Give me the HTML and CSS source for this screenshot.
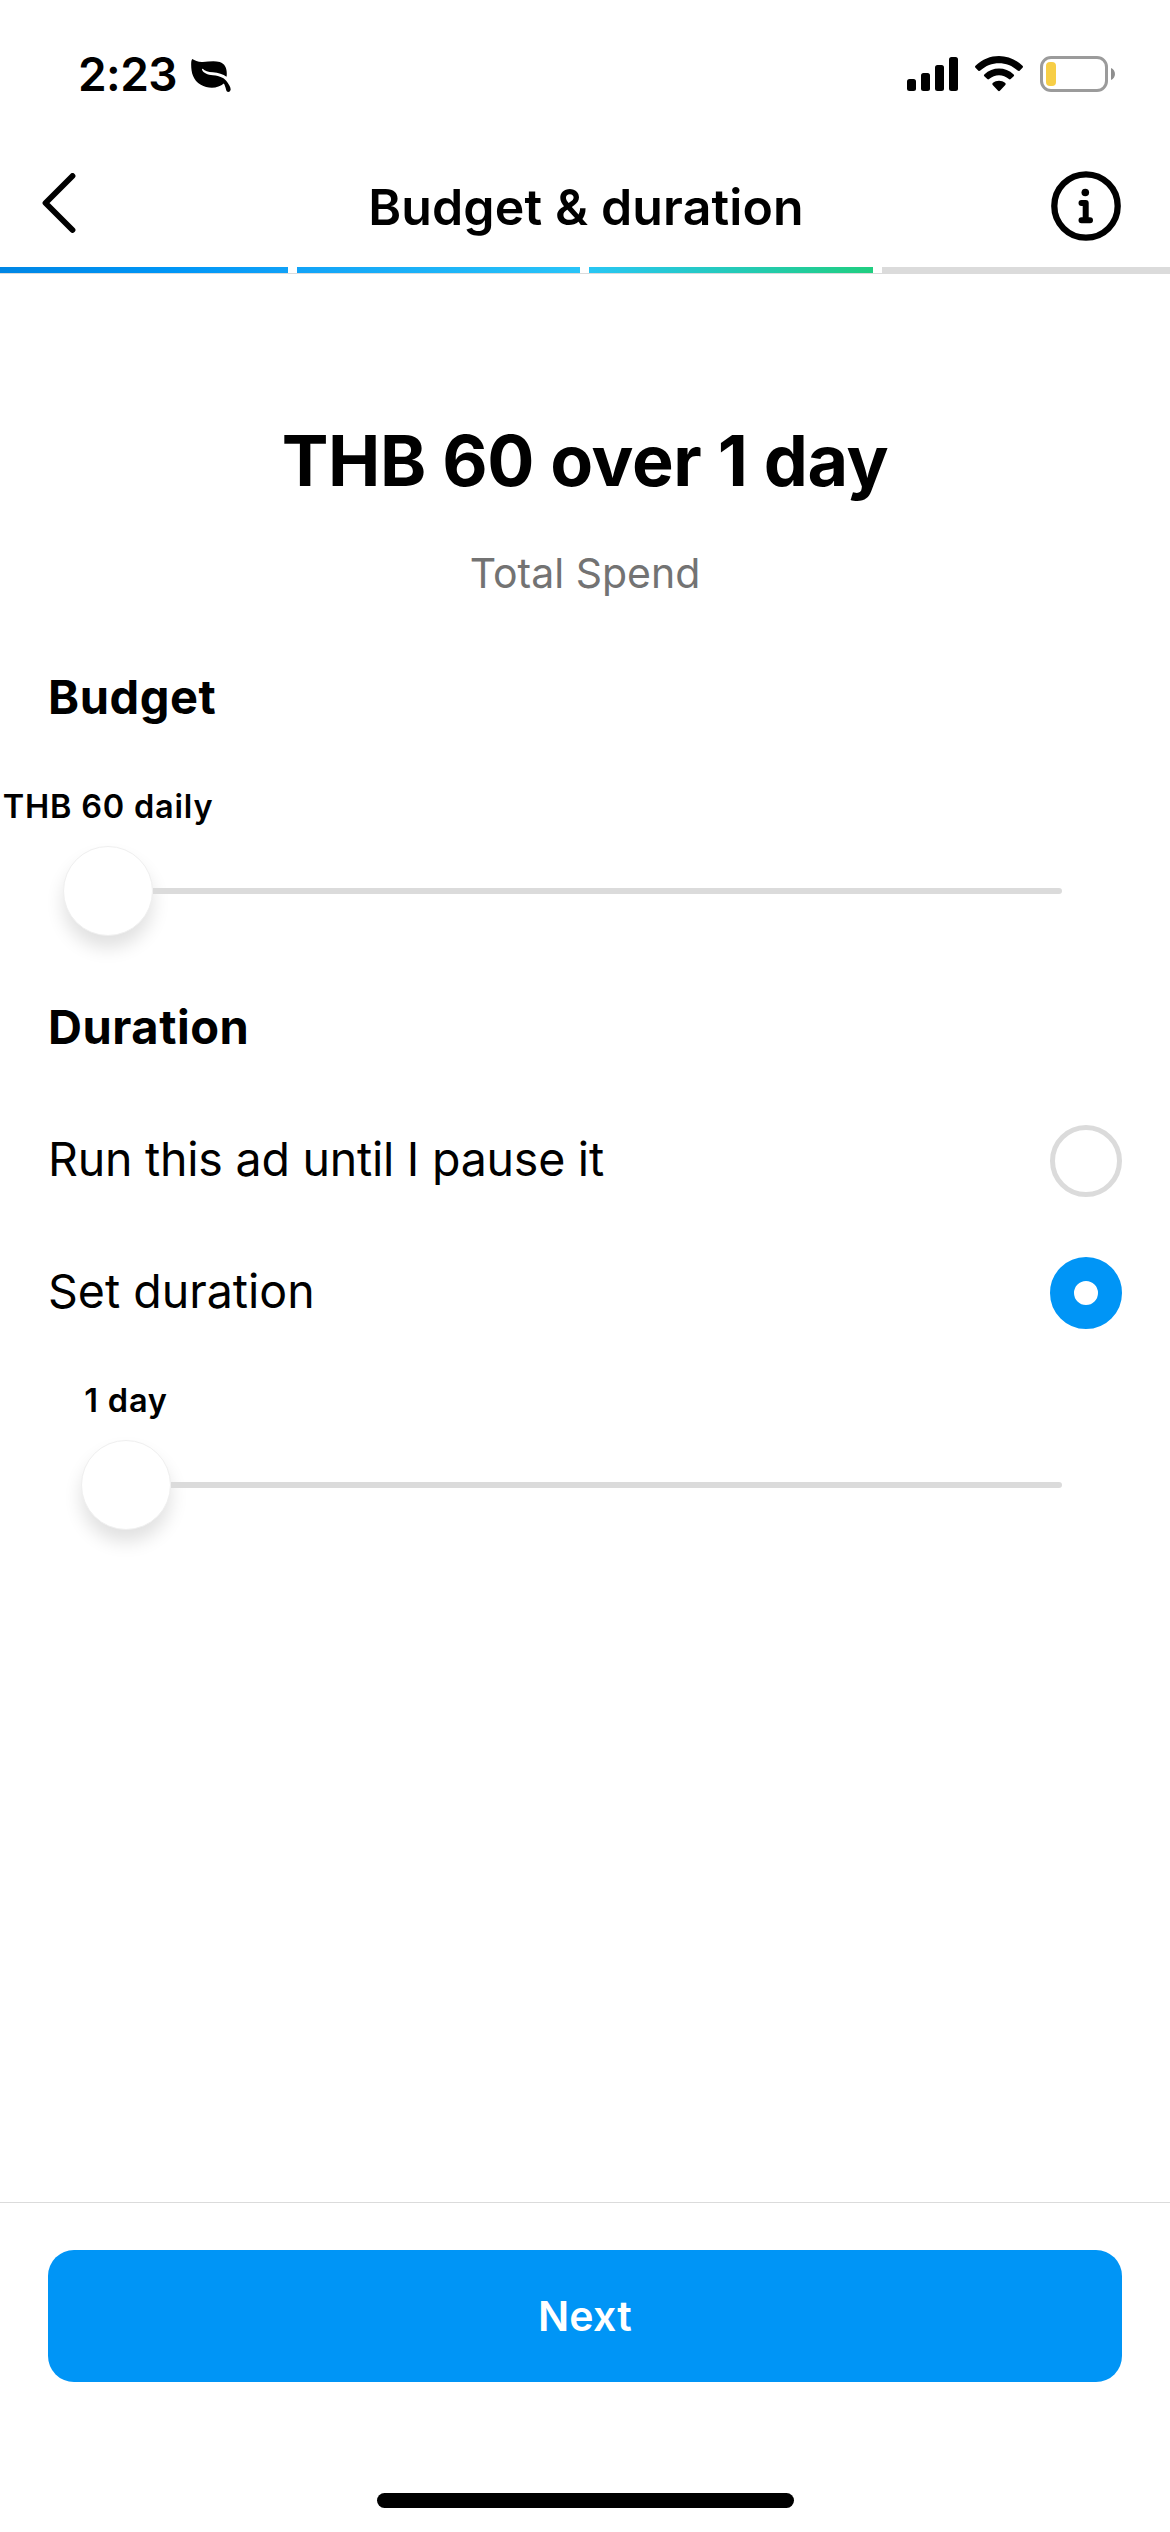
FILE: index.html
```html
<!DOCTYPE html>
<html lang="en">
<head>
<meta charset="utf-8">
<title>Budget &amp; duration</title>
<link rel="stylesheet" href="styles.css">
</head>
<body>
<div class="screen">
  <div class="status-bar">
    <div class="status-left">
      <span class="time">2:23</span>
      <svg class="leaf" width="40" height="35" viewBox="0 0 41 36">
        <path d="M1.2 1C4 2.5 7 4.2 12 4C18 3.8 24 2.5 29.500 4.200C35.500 6.200 37.500 12 36.500 19.300C33 16.500 28 15.300 22.500 14.700C17.500 14.200 14 13.300 12.300 11.200C11.700 10.600 11 11.200 11.300 12C12.500 15.500 17 17.200 22.500 17.700C30 18.400 34.500 20.500 37.300 25C39 27.700 41.200 30.500 40.600 33C40 35.600 36.600 35.600 36.100 33C35.500 30.300 34.700 28 33.700 26.300C28 31.500 17.500 32 10 27.500C2 22.700 0 15 .1 6C.1 4 .4 2 1.200 1Z"/>
      </svg>
    </div>
    <div class="status-right">
      <svg class="signal" width="51" height="34" viewBox="0 0 51 34">
        <rect x="0" y="22" width="9" height="12" rx="2.500"/>
        <rect x="14" y="16" width="9" height="18" rx="2.500"/>
        <rect x="28" y="8" width="9" height="26" rx="2.500"/>
        <rect x="42" y="0" width="9" height="34" rx="2.500"/>
      </svg>
      <svg class="wifi" width="48" height="36" viewBox="0 0 48 36">
        <path d="M.5 9.800C14-3.200 34-3.200 47.500 9.800Q48.500 10.800 47.500 11.800L44.600 14.700Q43.700 15.500 42.700 14.600C32 4.800 16 4.800 5.300 14.600Q4.300 15.500 3.400 14.700L.5 11.800Q-.5 10.800 .5 9.800Z"/>
        <path d="M9.300 18.400C17.700 10.500 30.300 10.500 38.700 18.400Q39.600 19.300 38.700 20.200L35.700 23.100Q34.800 23.900 33.900 23.100C28.200 18 19.800 18 14.100 23.100Q13.200 23.900 12.300 23.100L9.300 20.200Q8.400 19.300 9.300 18.400Z"/>
        <path d="M17.700 27.100C21.500 24.100 26.500 24.100 30.300 27.100Q31.200 28 30.300 28.900L24.900 34.800Q24 35.600 23.100 34.800L17.700 28.900Q16.800 28 17.700 27.100Z"/>
      </svg>
      <svg class="battery" width="75" height="36" viewBox="0 0 75 36">
        <rect x="1.500" y="1.500" width="65" height="33" rx="9.500" fill="none" stroke="#9b9b9b" stroke-width="3"/>
        <rect x="6" y="6" width="10" height="24" rx="4" fill="#f7ce46"/>
        <path d="M71 12C76.300 14 76.300 22 71 24Z" fill="#8e8e8e"/>
      </svg>
    </div>
  </div>

  <header class="header">
    <svg class="back" width="34" height="60" viewBox="0 0 34 60">
      <path d="M30.500 3L3.500 30L30.500 57" fill="none" stroke="#000" stroke-width="5.800" stroke-linecap="round" stroke-linejoin="round"/>
    </svg>
    <h1 class="header-title">Budget &amp; duration</h1>
    <svg class="info" width="70" height="70" viewBox="0 0 70 70">
      <circle cx="35" cy="35" r="31.700" fill="none" stroke="#000" stroke-width="6.300"/>
      <circle cx="34.300" cy="21.500" r="3.800"/>
      <path d="M30.500 32H34.700V49.300M30.500 49.300H39" fill="none" stroke="#000" stroke-width="6" stroke-linecap="round" stroke-linejoin="round"/>
    </svg>
  </header>

  <div class="progress">
    <span class="step step-1"></span>
    <span class="step step-2"></span>
    <span class="step step-3"></span>
    <span class="step step-4"></span>
  </div>

  <main class="content">
    <p class="total">THB 60 over 1 day</p>
    <p class="total-caption">Total Spend</p>

    <h2 class="section-title">Budget</h2>
    <div class="slider slider-budget">
      <div class="slider-label">THB 60 daily</div>
      <div class="slider-row"><span class="thumb"></span><span class="track"></span></div>
    </div>

    <h2 class="section-title">Duration</h2>
    <div class="option"><span class="option-label option-run">Run this ad until I pause it</span><span class="radio"></span></div>
    <div class="option"><span class="option-label">Set duration</span><span class="radio radio-on"></span></div>
    <div class="slider slider-duration">
      <div class="slider-label">1 day</div>
      <div class="slider-row"><span class="thumb"></span><span class="track"></span></div>
    </div>
  </main>

  <footer class="footer">
    <button class="next">Next</button>
    <span class="home-indicator"></span>
  </footer>
</div>
</body>
</html>
```
FILE: styles.css
```css
* { box-sizing: border-box; }

body {
  margin: 0;
  background: #fff;
  color: #000;
  font-family: Inter, "Liberation Sans", sans-serif;
}

h1, h2, p { margin: 0; }

.screen {
  display: flex;
  flex-direction: column;
  width: 1170px;
  height: 2532px;
  overflow: hidden;
}

.status-bar {
  display: flex;
  justify-content: space-between;
  align-items: center;
  height: 148px;
  padding: 0 55px 0 78px;
}

.status-left, .status-right { display: flex; align-items: center; }
.status-left { gap: 14px; }
.time {
  font-size: 46px;
  font-weight: 600;
  line-height: 56px;
  letter-spacing: -0.6px;
}
.leaf { margin-top: 2px; }
.signal { margin-right: 17px; }
.wifi { margin: 0 17px 1px 0; }

.header {
  display: flex;
  justify-content: space-between;
  align-items: center;
  height: 119px;
  padding: 0 49px 0 42px;
}

.back { margin: 0 45px 9px 0; }
.info { margin-bottom: 3px; }
.header-title {
  margin-bottom: 2px;
  font-size: 50px;
  font-weight: 600;
  line-height: 60px;
  letter-spacing: 0.14px;
}

.progress {
  display: grid;
  grid-template-columns: 288px 283px 284px 288px;
  column-gap: 9px;
  height: 7px;
  border-bottom: 1px solid #dbdbdb;
}

.step-1 { background: linear-gradient(90deg, #0086e4, #0096f6 60%, #10a1f7); }
.step-2 { background: linear-gradient(90deg, #12a3f7, #28c4f8); }
.step-3 { background: linear-gradient(90deg, #28c6f4, #20ce80); }
.step-4 { background: #dbdbdb; }

.content { flex: 1; padding: 145px 48px 0; }

.total {
  font-size: 70px;
  font-weight: 700;
  line-height: 84px;
  letter-spacing: -0.36px;
  text-align: center;
}

.total-caption {
  margin-top: 45px;
  color: #737373;
  font-size: 41px;
  line-height: 50px;
  text-align: center;
}

.section-title {
  margin-top: 69px;
  font-size: 47px;
  font-weight: 700;
  line-height: 60px;
  letter-spacing: 0.55px;
}

.slider { width: 999px; margin-left: 15px; }
.slider-budget { margin-top: 60px; margin-bottom: -8px; }
.slider-duration { width: 981px; margin-top: 52px; margin-left: 33px; }

.slider-label {
  display: flex;
  justify-content: center;
  width: 90px;
  margin-bottom: 19px;
  font-size: 32.500px;
  font-weight: 600;
  line-height: 40px;
  letter-spacing: 0.8px;
  white-space: nowrap;
}

.slider-row { display: flex; align-items: center; }

.thumb {
  width: 90px;
  height: 90px;
  border: 1px solid #efefef;
  border-radius: 50%;
  background: #fff;
  box-shadow: 0 12px 18px rgba(0, 0, 0, 0.12);
}

.track {
  flex: 1;
  height: 6px;
  border-radius: 0 3px 3px 0;
  background: #dbdbdb;
}

.option {
  display: flex;
  justify-content: space-between;
  align-items: center;
  height: 72px;
  margin-top: 60px;
}

.section-title + .option { margin-top: 68px; }

.option-label { padding-bottom: 4px; font-size: 46.500px; line-height: 60px; }
.option-run { letter-spacing: -0.23px; }

.radio {
  width: 72px;
  height: 72px;
  border: 5px solid #dbdbdb;
  border-radius: 50%;
}

.radio-on { border: 24px solid #0095f6; }

.footer {
  display: flex;
  flex-direction: column;
  align-items: center;
  height: 330px;
  padding: 47px 48px 24px;
  border-top: 1px solid #dbdbdb;
}

.next {
  width: 100%;
  height: 132px;
  padding: 0;
  border: 0;
  border-radius: 26px;
  background: #0095f6;
  color: #fff;
  font: 600 41px/132px Inter, "Liberation Sans", sans-serif;
  letter-spacing: 0.3px;
}

.home-indicator {
  width: 417px;
  height: 15px;
  margin-top: auto;
  border-radius: 8px;
  background: #000;
}
```
